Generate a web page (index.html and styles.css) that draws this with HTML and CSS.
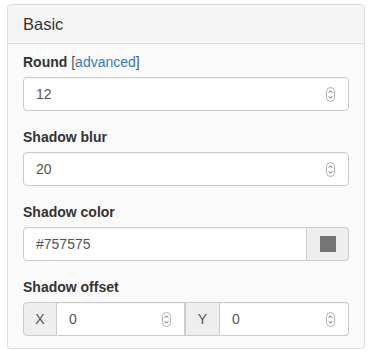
FILE: index.html
```html
<!DOCTYPE html>
<html>
<head>
<meta charset="utf-8">
<link rel="stylesheet" href="styles.css">
</head>
<body>
<div class="panel">
  <div class="panel-heading"><h3 class="panel-title">Basic</h3></div>
  <div class="panel-body">
    <div class="form-group">
      <label class="label">Round <span class="bracket">[<a class="link">advanced</a>]</span></label>
      <div class="control">
        <span class="value">12</span>
        <svg class="spin" width="9" height="15" viewBox="0 0 9 15"><rect x="0.5" y="0.5" width="8" height="14" rx="4" fill="#fff" stroke="#b5b5b5"/><path d="M2.8 5.6 L4.5 3.9 L6.2 5.6" fill="none" stroke="#555" stroke-width="1"/><path d="M2.8 9.4 L4.5 11.1 L6.2 9.4" fill="none" stroke="#555" stroke-width="1"/></svg>
      </div>
    </div>
    <div class="form-group">
      <label class="label">Shadow blur</label>
      <div class="control">
        <span class="value">20</span>
        <svg class="spin" width="9" height="15" viewBox="0 0 9 15"><rect x="0.5" y="0.5" width="8" height="14" rx="4" fill="#fff" stroke="#b5b5b5"/><path d="M2.8 5.6 L4.5 3.9 L6.2 5.6" fill="none" stroke="#555" stroke-width="1"/><path d="M2.8 9.4 L4.5 11.1 L6.2 9.4" fill="none" stroke="#555" stroke-width="1"/></svg>
      </div>
    </div>
    <div class="form-group">
      <label class="label">Shadow color</label>
      <div class="input-group">
        <div class="control grow left-part"><span class="value">#757575</span></div>
        <div class="addon addon-right"><span class="swatch"></span></div>
      </div>
    </div>
    <div class="form-group last">
      <label class="label">Shadow offset</label>
      <div class="offset-grid">
        <div class="input-group">
          <div class="addon addon-left">X</div>
          <div class="control grow right-part">
            <span class="value">0</span>
            <svg class="spin" width="9" height="15" viewBox="0 0 9 15"><rect x="0.5" y="0.5" width="8" height="14" rx="4" fill="#fff" stroke="#b5b5b5"/><path d="M2.8 5.6 L4.5 3.9 L6.2 5.6" fill="none" stroke="#555" stroke-width="1"/><path d="M2.8 9.4 L4.5 11.1 L6.2 9.4" fill="none" stroke="#555" stroke-width="1"/></svg>
          </div>
        </div>
        <div class="input-group second">
          <div class="addon addon-left">Y</div>
          <div class="control grow right-part">
            <span class="value">0</span>
            <svg class="spin" width="9" height="15" viewBox="0 0 9 15"><rect x="0.5" y="0.5" width="8" height="14" rx="4" fill="#fff" stroke="#b5b5b5"/><path d="M2.8 5.6 L4.5 3.9 L6.2 5.6" fill="none" stroke="#555" stroke-width="1"/><path d="M2.8 9.4 L4.5 11.1 L6.2 9.4" fill="none" stroke="#555" stroke-width="1"/></svg>
          </div>
        </div>
      </div>
    </div>
  </div>
</div>
</body>
</html>
```
FILE: styles.css
```css
* { box-sizing: border-box; }
html, body { background: #fff; }
body {
  margin: 0;
  padding: 4px 5px 0 7px;
  font-family: "Liberation Sans", Arial, sans-serif;
  color: #333;
  font-size: 14px;
}
.panel {
  width: 358px;
  border: 1px solid #ddd;
  border-radius: 4px;
  background: #fafafa;
  box-shadow: 0 1px 1px rgba(0,0,0,0.05);
  overflow: hidden;
}
.panel-heading {
  background: #f5f5f5;
  border-bottom: 1px solid #ddd;
  padding: 10px 15px;
}
.panel-title {
  margin: 0;
  font-size: 16.5px;
  line-height: 18px;
  font-weight: normal;
  color: #333;
}
.panel-body {
  padding: 8px 15px 12px;
}
.form-group { margin-bottom: 16px; }
.form-group.last { margin-bottom: 0; }
.label {
  display: block;
  font-weight: bold;
  font-size: 14px;
  line-height: 20px;
  margin-bottom: 5px;
  color: #333;
}
.bracket { font-weight: normal; color: #555; }
.link { color: #337ab7; text-decoration: none; }
.control {
  position: relative;
  height: 34px;
  border: 1px solid #ccc;
  border-radius: 4px;
  background: #fff;
  display: flex;
  align-items: center;
  padding: 0 12px;
  color: #555;
  font-size: 14px;
  box-shadow: inset 0 1px 1px rgba(0,0,0,0.04);
}
.spin {
  position: absolute;
  right: 13px;
  top: 9px;
}
.input-group {
  display: flex;
  height: 34px;
}
.grow { flex: 1; min-width: 0; }
.left-part { border-top-right-radius: 0; border-bottom-right-radius: 0; }
.right-part { border-top-left-radius: 0; border-bottom-left-radius: 0; border-left: 0; }
.addon {
  background: #eee;
  border: 1px solid #ccc;
  display: flex;
  align-items: center;
  justify-content: center;
  color: #555;
  font-size: 14px;
  padding: 0 12px;
}
.addon-right {
  width: 42px;
  border-left: 0;
  border-radius: 0 4px 4px 0;
}
.addon-left {
  width: 34px;
  border-radius: 4px 0 0 4px;
}
.swatch {
  width: 16px;
  height: 16px;
  background: #757575;
  display: block;
  flex: none;
}
.offset-grid {
  display: grid;
  grid-template-columns: 162px 164px;
}
.offset-grid .input-group .right-part { border-radius: 0; }
.offset-grid .input-group .addon-left { border-radius: 4px 0 0 4px; }
.offset-grid .second .addon-left { border-radius: 0; border-left: 1px solid #ccc; width: 35px; }
.offset-grid .second .right-part { border-radius: 0 4px 4px 0; }
```
